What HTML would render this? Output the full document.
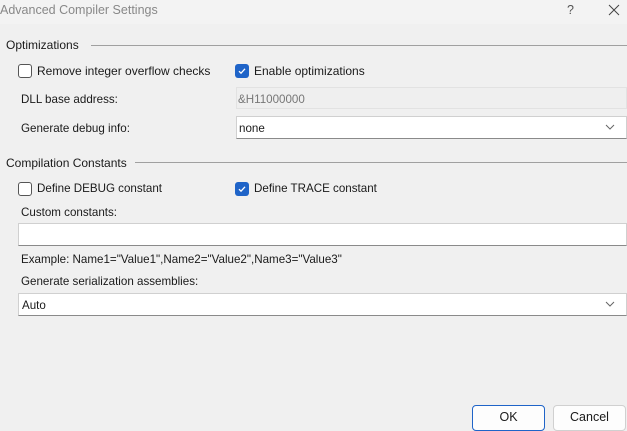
<!DOCTYPE html><html><head><style>
body{margin:0;width:627px;height:423px;background:#f0f0f0;font-family:"Liberation Sans",sans-serif;font-size:11.6px;color:#1a1a1a;position:relative;overflow:hidden}
.a{position:absolute;white-space:nowrap}
.title{left:0;top:0;width:627px;height:24px;background:#f3f3f3}
.line{height:1px;background:#a0a0a0}
.cb{width:12px;height:12px;border:1px solid #555;border-radius:3px;background:#fff}
.cbc{width:14px;height:14px;border-radius:3px;background:#1f64c8}
.box{background:#fff;border:1px solid #d0d0d0;border-bottom-color:#8a8a8a;box-sizing:border-box}
.btn{background:#fdfdfd;border:1px solid #d0d0d0;border-radius:4px;box-sizing:border-box;text-align:center;font-size:12.5px;line-height:22px}
</style></head><body>
<div class="a title"></div>
<div class="a" style="left:0;top:3px;color:#888;font-size:12.5px">Advanced Compiler Settings</div>
<div class="a" style="left:567px;top:3px;color:#555;font-size:12.5px">?</div>
<svg class="a" style="left:608px;top:4px" width="12" height="12"><path d="M1 1l10 10M11 1L1 11" stroke="#444" stroke-width="1"/></svg>

<div class="a" style="left:6px;top:38px;font-size:12px">Optimizations</div>
<div class="a line" style="left:91px;top:45px;width:536px"></div>
<div class="a cb" style="left:18px;top:64px"></div>
<div class="a" style="left:37px;top:64px;font-size:12px">Remove integer overflow checks</div>
<div class="a cbc" style="left:235px;top:64px"><svg width="14" height="14"><path d="M4 7.2l2 2 4-4.4" stroke="#fff" stroke-width="1.3" fill="none"/></svg></div>
<div class="a" style="left:254px;top:64px;font-size:12px">Enable optimizations</div>
<div class="a" style="left:21px;top:93px">DLL base address:</div>
<div class="a" style="left:236px;top:87px;width:391px;height:22px;border:1px solid #e2e2e2;box-sizing:border-box;background:#efefef"></div>
<div class="a" style="left:238px;top:93px;color:#777">&amp;H11000000</div>
<div class="a" style="left:21px;top:122px">Generate debug info:</div>
<div class="a box" style="left:236px;top:116px;width:391px;height:23px"></div>
<div class="a" style="left:239px;top:122px">none</div>
<svg class="a" style="left:605px;top:124px" width="10" height="7"><path d="M1 1l4 4 4-4" stroke="#666" fill="none"/></svg>

<div class="a" style="left:6px;top:156px;font-size:12px">Compilation Constants</div>
<div class="a line" style="left:135px;top:162px;width:492px"></div>
<div class="a cb" style="left:18px;top:182px"></div>
<div class="a" style="left:37px;top:182px">Define DEBUG constant</div>
<div class="a cbc" style="left:235px;top:182px"><svg width="14" height="14"><path d="M4 7.2l2 2 4-4.4" stroke="#fff" stroke-width="1.3" fill="none"/></svg></div>
<div class="a" style="left:254px;top:182px">Define TRACE constant</div>
<div class="a" style="left:21px;top:206px">Custom constants:</div>
<div class="a box" style="left:18px;top:223px;width:609px;height:23px"></div>
<div class="a" style="left:21px;top:253px">Example: Name1="Value1",Name2="Value2",Name3="Value3"</div>
<div class="a" style="left:21px;top:275px">Generate serialization assemblies:</div>
<div class="a box" style="left:18px;top:293px;width:609px;height:23px"></div>
<div class="a" style="left:22px;top:299px">Auto</div>
<svg class="a" style="left:605px;top:301px" width="10" height="7"><path d="M1 1l4 4 4-4" stroke="#666" fill="none"/></svg>

<div class="a btn" style="left:472px;top:405px;width:73px;height:26px;border-color:#1f64c8">OK</div>
<div class="a btn" style="left:553px;top:405px;width:73px;height:26px">Cancel</div>
</body></html>
